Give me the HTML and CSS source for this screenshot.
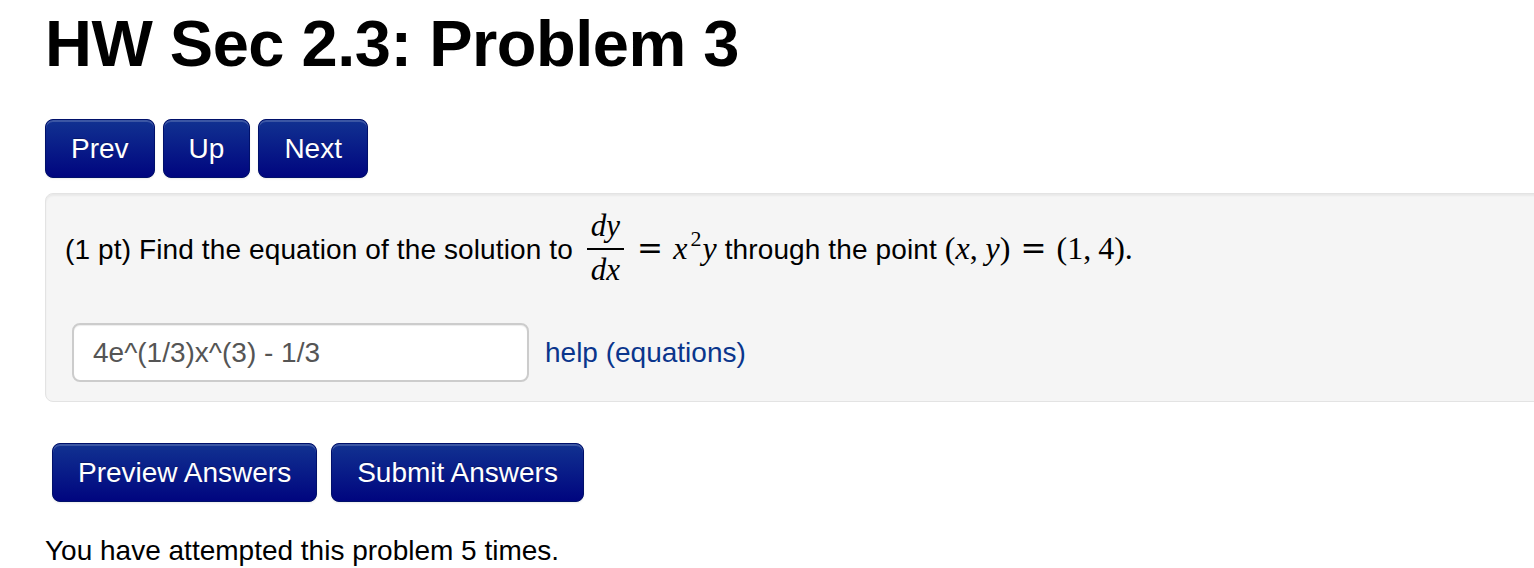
FILE: index.html
```html
<!DOCTYPE html>
<html lang="en">
<head>
<meta charset="utf-8">
<title>HW Sec 2.3: Problem 3</title>
<link rel="stylesheet" href="styles.css">
</head>
<body>
<div class="page">
  <h1 class="title">HW Sec 2.3: Problem 3</h1>
  <nav class="nav">
    <a class="btn" href="#">Prev</a>
    <a class="btn" href="#">Up</a>
    <a class="btn" href="#">Next</a>
  </nav>
  <div class="well">
    <p class="question">(1 pt) Find the equation of the solution to <span class="frac"><span class="num">dy</span><span class="den">dx</span></span><span class="eq">=</span><span class="mi">x</span><span class="sup">2</span><span class="mi">y</span> through the point <span class="mn">(</span><span class="mi">x</span><span class="mn">,</span> <span class="mi">y</span><span class="mn">)</span><span class="eq">=</span><span class="mn">(1,</span><span class="mn sp">4).</span></p>
    <div class="answer-row">
      <input class="answer" type="text" value="4e^(1/3)x^(3) - 1/3">
      <a class="help" href="#">help (equations)</a>
    </div>
  </div>
  <div class="actions">
    <button class="btn" type="button">Preview Answers</button>
    <button class="btn" type="button">Submit Answers</button>
  </div>
  <p class="attempts">You have attempted this problem 5 times.</p>
</div>
</body>
</html>
```

FILE: styles.css
```css
html, body {
  margin: 0;
  padding: 0;
  background: #ffffff;
  overflow: hidden;
}

body {
  font-family: "Liberation Sans", Arial, Helvetica, sans-serif;
  font-size: 28px;
  line-height: 40px;
  color: #000;
}

.page {
  padding: 4px 0 0 45px;
}

.title {
  margin: 0;
  font-size: 65px;
  line-height: 80px;
  font-weight: bold;
  letter-spacing: -0.5px;
  color: #000;
}

.nav {
  display: flex;
  gap: 8px;
  margin-top: 35px;
}

.btn {
  display: inline-flex;
  align-items: center;
  justify-content: center;
  box-sizing: border-box;
  height: 59px;
  padding: 0 25px;
  font-family: "Liberation Sans", Arial, Helvetica, sans-serif;
  font-size: 28px;
  line-height: 40px;
  color: #ffffff;
  text-decoration: none;
  text-shadow: 0 -1px 0 rgba(0, 0, 0, 0.25);
  background-color: #000a80;
  background-image: linear-gradient(to bottom, #113291, #00057f);
  border: 1px solid #00106a;
  border-radius: 8px;
  box-shadow: inset 0 2px 0 rgba(255, 255, 255, 0.18), 0 1px 2px rgba(0, 0, 0, 0.08);
  cursor: pointer;
}

.well {
  margin-top: 15px;
  margin-right: -40px;
  padding: 17px 19px 19px 19px;
  background: #f5f5f5;
  border: 1px solid #e3e3e3;
  border-radius: 8px;
  box-shadow: inset 0 2px 2px rgba(0, 0, 0, 0.05);
}

.question {
  margin: 0;
  line-height: 40px;
  letter-spacing: 0.12px;
}

.frac {
  display: inline-flex;
  flex-direction: column;
  vertical-align: 23px;
  margin: 0 3px 0 6px;
  font-family: "Liberation Serif", "Times New Roman", serif;
  font-style: italic;
  font-size: 31px;
  line-height: 30px;
  text-align: center;
  letter-spacing: 0;
}

.num {
  padding: 0 4px 7px;
  border-bottom: 2px solid #000;
}

.den {
  padding: 5px 4px 0;
}

.eq {
  font-family: "DejaVu Serif", "Liberation Serif", serif;
  font-size: 31px;
  margin: 0 10px 0 10px;
}

.mi {
  font-family: "Liberation Serif", "Times New Roman", serif;
  font-style: italic;
  font-size: 32px;
  letter-spacing: 0;
}

.mn {
  font-family: "Liberation Serif", "Times New Roman", serif;
  font-size: 32px;
  letter-spacing: 0;
}

.sp {
  margin-left: 7px;
}

.sup {
  font-family: "Liberation Serif", "Times New Roman", serif;
  font-size: 22px;
  line-height: 0;
  vertical-align: 13px;
  margin: 0 1px 0 3px;
}

.answer-row {
  display: flex;
  align-items: center;
  margin-top: 38px;
  padding-left: 7px;
  gap: 16px;
}

.answer {
  box-sizing: border-box;
  width: 457px;
  height: 59px;
  margin: 0;
  padding: 0 19px;
  font-family: "Liberation Sans", Arial, Helvetica, sans-serif;
  font-size: 28px;
  color: #555555;
  background: #ffffff;
  border: 2px solid #cccccc;
  border-radius: 8px;
  box-shadow: inset 0 1px 1px rgba(0, 0, 0, 0.075);
  outline: none;
}

.help {
  color: #0a358c;
  text-decoration: none;
}

.actions {
  display: flex;
  gap: 14px;
  margin-top: 41px;
  padding-left: 7px;
}

.attempts {
  margin: 29px 0 0;
  line-height: 40px;
  color: #000;
}
```
